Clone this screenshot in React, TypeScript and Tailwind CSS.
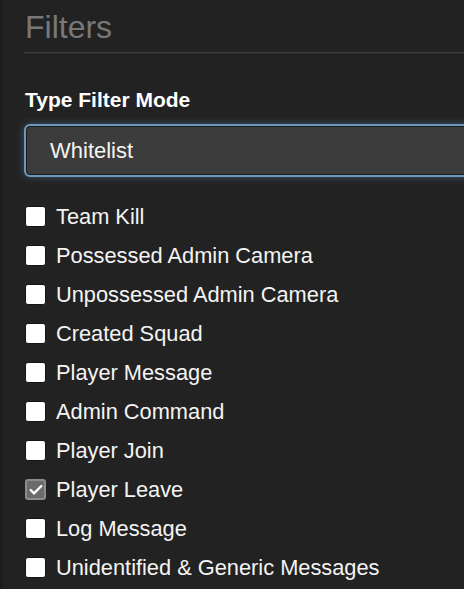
import { Check } from "lucide-react";

// ── Filter options ──────────────────────────────────────────────
const FILTERS = [
  { label: "Team Kill", checked: false },
  { label: "Possessed Admin Camera", checked: false },
  { label: "Unpossessed Admin Camera", checked: false },
  { label: "Created Squad", checked: false },
  { label: "Player Message", checked: false },
  { label: "Admin Command", checked: false },
  { label: "Player Join", checked: false },
  { label: "Player Leave", checked: true },
  { label: "Log Message", checked: false },
  { label: "Unidentified & Generic Messages", checked: false },
];

function Box({ checked }: { checked: boolean }) {
  if (checked) {
    return (
      <span className="flex size-[21px] shrink-0 items-center justify-center rounded-[3px] border-2 border-[#8c8c8c] bg-[#6b6b6b]">
        <Check className="size-[16px] text-white" strokeWidth={3.5} />
      </span>
    );
  }
  return <span className="size-[21px] shrink-0 rounded-[3px] border border-[#151515] bg-white" />;
}

export default function App() {
  return (
    <div className="h-[589px] w-[464px] overflow-hidden border-l-[3px] border-[#1d1d1d] bg-[#222222] pl-[21px] font-['Liberation_Sans',Arial,sans-serif]">
      {/* ── Header ── */}
      <h2 className="pt-[11px] pl-px text-[32px] leading-none text-[#787878]">Filters</h2>
      <div className="mt-[9px] h-px bg-[#3c3c3c]" />
      <div className="h-px bg-[#2b2b2b]" />

      {/* ── Mode select ── */}
      <div className="mt-[35px] pl-px text-[21px] font-bold leading-none text-white">Type Filter Mode</div>
      <div className="mt-[14px] flex h-[53px] w-[520px] items-center rounded-[6px] border-2 border-[#6f97bb] bg-[#3c3c3c] pl-[24px] text-[22px] leading-none text-[#f4f4f4] shadow-[0_0_8px_rgba(90,140,190,0.45),inset_0_0_0_1px_#1c1c1c]">
        Whitelist
      </div>

      {/* ── Checkbox list ── */}
      <div className="mt-[20px] flex flex-col pl-px">
        {FILTERS.map((f) => (
          <label key={f.label} className="flex h-[39px] items-center gap-[10px]">
            <Box checked={f.checked} />
            <span className="whitespace-nowrap text-[21.8px] leading-none text-[#f4f4f4]">{f.label}</span>
          </label>
        ))}
      </div>
    </div>
  );
}
